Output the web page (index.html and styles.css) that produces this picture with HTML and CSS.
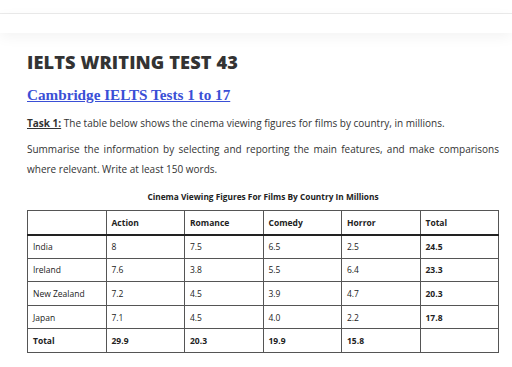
FILE: index.html
```html
<!DOCTYPE html>
<html>
<head>
<meta charset="utf-8">
<link rel="stylesheet" href="styles.css">
</head>
<body>
<header class="topbar"></header>
<div class="subbar"></div>
<main class="content">
  <h1 class="title">IELTS WRITING TEST 43</h1>
  <h2 class="sub"><a href="#" class="link">Cambridge IELTS Tests 1 to 17</a></h2>
  <p class="para"><b class="task">Task 1:</b> The table below shows the cinema viewing figures for films by country, in millions.</p>
  <p class="para justify">Summarise the information by selecting and reporting the main features, and make comparisons where relevant. Write at least 150 words.</p>
  <div class="caption">Cinema Viewing Figures For Films By Country In Millions</div>
  <table class="data">
    <thead>
      <tr><th></th><th>Action</th><th>Romance</th><th>Comedy</th><th>Horror</th><th>Total</th></tr>
    </thead>
    <tbody>
      <tr><td>India</td><td>8</td><td>7.5</td><td>6.5</td><td>2.5</td><td class="b">24.5</td></tr>
      <tr><td>Ireland</td><td>7.6</td><td>3.8</td><td>5.5</td><td>6.4</td><td class="b">23.3</td></tr>
      <tr><td>New Zealand</td><td>7.2</td><td>4.5</td><td>3.9</td><td>4.7</td><td class="b">20.3</td></tr>
      <tr><td>Japan</td><td>7.1</td><td>4.5</td><td>4.0</td><td>2.2</td><td class="b">17.8</td></tr>
      <tr><td class="b">Total</td><td class="b">29.9</td><td class="b">20.3</td><td class="b">19.9</td><td class="b">15.8</td><td></td></tr>
    </tbody>
  </table>
</main>
</body>
</html>
```
FILE: styles.css
```css
html, body {
  margin: 0;
  padding: 0;
  background: #fff;
}
body {
  font-family: "Open Sans", "DejaVu Sans", sans-serif;
  color: #333;
}
.topbar {
  height: 14px;
  border-bottom: 1px solid #ebebeb;
  box-sizing: border-box;
}
.subbar {
  height: 19px;
  background: #fff;
  box-shadow: 0 4px 14px rgba(0,0,0,0.05);
  position: relative;
}
.content {
  padding: 14px 13px 0 27px;
}
.title {
  margin: 0;
  font-size: 18.2px;
  font-weight: 800;
  line-height: 30px;
  color: #333;
  letter-spacing: 0.1px;
}
.sub {
  margin: 6px 0 0;
  font-family: "Liberation Serif", "Times New Roman", serif;
  font-size: 15.2px;
  font-weight: 700;
  line-height: 24px;
}
.link {
  color: #3a4fd6;
  text-decoration: underline;
}
.para {
  margin: 6px 0 0;
  font-size: 10px;
  line-height: 20px;
  color: #333;
}
.task {
  text-decoration: underline;
  font-weight: 700;
}
.justify {
  text-align: justify;
  margin-top: 6px;
}
.caption {
  text-align: center;
  font-size: 8.3px;
  font-weight: 700;
  color: #222;
  margin-top: 12px;
  line-height: 12px;
}
.data {
  width: 472px;
  border-collapse: collapse;
  margin-top: 7px;
  table-layout: fixed;
  font-size: 8.5px;
  color: #222;
}
.data th, .data td {
  border: 1px solid #555;
  height: 23.6px;
  padding: 0 5px;
  text-align: left;
  box-sizing: border-box;
}
.data th {
  height: 24px;
  font-weight: 700;
  border-bottom: 2px solid #222;
}
.data .b {
  font-weight: 700;
}
```
